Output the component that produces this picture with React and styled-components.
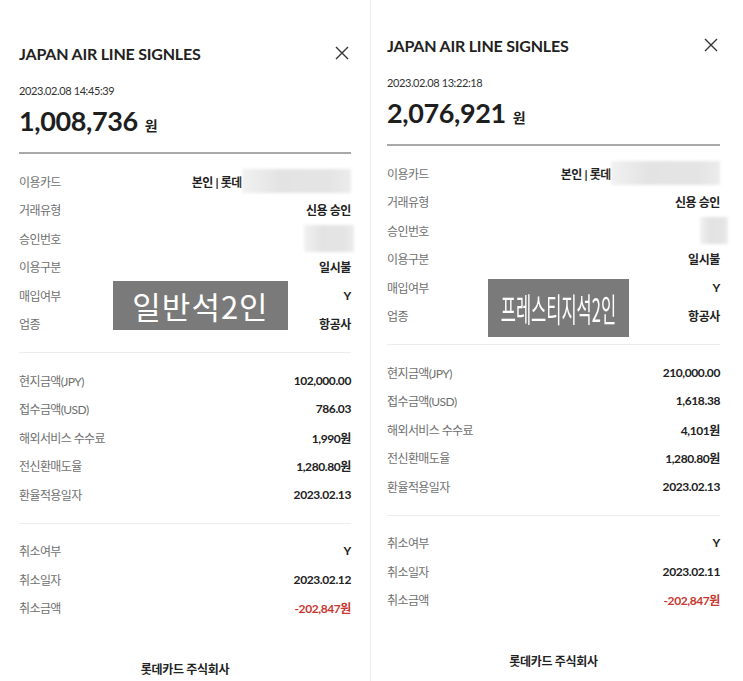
import React from "react";
import styled, { createGlobalStyle } from "styled-components";

const Global = createGlobalStyle`
  html, body {
    margin: 0;
    padding: 0;
    background: #fff;
    overflow: hidden;
  }
  body {
    font-family: "Lato", "Noto Sans CJK KR", sans-serif;
    color: #222;
  }
`;

const Page = styled.div`
  display: flex;
  width: 743px;
  height: 681px;
  background: #fff;
`;

const Panel = styled.div`
  box-sizing: border-box;
  width: ${(p) => p.$width}px;
  padding: ${(p) => p.$top}px ${(p) => p.$right}px 0 ${(p) => p.$left}px;
  border-right: ${(p) => (p.$border ? "1px solid #ececec" : "none")};
`;

const Head = styled.div`
  display: flex;
  align-items: center;
  justify-content: space-between;
  height: 20px;
`;

const Title = styled.h1`
  margin: 0;
  font-size: 16px;
  font-weight: 700;
  letter-spacing: -0.2px;
  color: #222;
`;

const Close = styled.button`
  display: flex;
  padding: 0;
  margin-right: 2px;
  border: 0;
  background: none;
`;

const DateText = styled.div`
  margin-top: 20px;
  line-height: 16px;
  font-size: 11px;
  letter-spacing: -0.4px;
  color: #333;
`;

const Amount = styled.div`
  display: flex;
  align-items: baseline;
  margin-top: 6px;
  height: 32px;
  line-height: 32px;
  font-size: 27px;
  font-weight: 700;
  letter-spacing: -0.4px;
  color: #1e1e1e;
`;

const Won = styled.span`
  margin-left: 7px;
  font-size: 14px;
  font-weight: 700;
`;

const Rule = styled.div`
  height: ${(p) => (p.$strong ? 2 : 1)}px;
  background: ${(p) => (p.$strong ? "#a9a9a9" : "#ededed")};
  margin-top: ${(p) => p.$mt || 0}px;
`;

const Section = styled.div`
  position: relative;
  padding: 13px 0 ${(p) => (p.$last ? 0 : 14)}px;
`;

const Row = styled.div`
  display: flex;
  align-items: center;
  justify-content: space-between;
  height: 28.5px;
`;

const Label = styled.span`
  font-size: 12px;
  color: #707070;
  letter-spacing: -0.6px;
`;

const Value = styled.span`
  display: flex;
  align-items: center;
  font-size: 12px;
  font-weight: 700;
  letter-spacing: -0.4px;
  color: ${(p) => (p.$red ? "#c8372f" : "#222")};
`;

const Blur = styled.span`
  display: inline-block;
  width: ${(p) => p.$w}px;
  height: ${(p) => p.$h}px;
  margin-right: ${(p) => p.$mr || 0}px;
  background: linear-gradient(90deg, #f1f1f1 0%, #e3e3e3 35%, #e4e4e4 80%, #ececec 100%);
  filter: blur(1.5px);
`;

const Stamp = styled.div`
  position: absolute;
  left: ${(p) => p.$x}px;
  top: ${(p) => p.$y}px;
  width: ${(p) => p.$w}px;
  height: ${(p) => p.$h}px;
  display: flex;
  align-items: center;
  justify-content: center;
  background: #7a7a7a;
  color: #fff;
  font-family: "Noto Sans CJK KR", sans-serif;
  font-weight: 400;
  overflow: hidden;
`;

const StampText = styled.span`
  display: inline-block;
  font-size: ${(p) => p.$size}px;
  letter-spacing: ${(p) => p.$ls || 0}px;
  transform: scaleX(${(p) => p.$sx || 1});
  white-space: nowrap;
`;

const Footer = styled.div`
  margin-top: 38px;
  line-height: 20px;
  text-align: center;
  font-size: 12px;
  font-weight: 700;
  letter-spacing: -0.3px;
  color: #222;
`;

function CloseIcon() {
  return (
    <svg width="14" height="14" viewBox="0 0 14 14">
      <path d="M1 1 L13 13 M13 1 L1 13" stroke="#333" strokeWidth="1.4" fill="none" />
    </svg>
  );
}

function Receipt({ data, layout }) {
  return (
    <Panel
      $width={layout.width}
      $top={layout.top}
      $left={layout.left}
      $right={layout.right}
      $border={layout.border}
    >
      <Head>
        <Title>JAPAN AIR LINE SIGNLES</Title>
        <Close>
          <CloseIcon />
        </Close>
      </Head>
      <DateText>{data.date}</DateText>
      <Amount>
        {data.amount}
        <Won>원</Won>
      </Amount>
      <Rule $strong $mt={15} />

      <Section>
        <Row>
          <Label>이용카드</Label>
          <Value>
            본인 | 롯데
            <Blur $w={109} $h={24} />
          </Value>
        </Row>
        <Row>
          <Label>거래유형</Label>
          <Value>신용 승인</Value>
        </Row>
        <Row>
          <Label>승인번호</Label>
          <Value>
            <Blur $w={layout.approvalW} $h={27} $mr={layout.approvalMr} />
          </Value>
        </Row>
        <Row>
          <Label>이용구분</Label>
          <Value>일시불</Value>
        </Row>
        <Row>
          <Label>매입여부</Label>
          <Value>Y</Value>
        </Row>
        <Row>
          <Label>업종</Label>
          <Value>항공사</Value>
        </Row>
        <Stamp $x={layout.stamp.x} $y={layout.stamp.y} $w={layout.stamp.w} $h={layout.stamp.h}>
          <StampText $size={layout.stamp.size} $sx={layout.stamp.sx} $ls={layout.stamp.ls}>
            {data.seat}
          </StampText>
        </Stamp>
      </Section>
      <Rule />

      <Section>
        <Row>
          <Label>현지금액(JPY)</Label>
          <Value>{data.jpy}</Value>
        </Row>
        <Row>
          <Label>접수금액(USD)</Label>
          <Value>{data.usd}</Value>
        </Row>
        <Row>
          <Label>해외서비스 수수료</Label>
          <Value>{data.fee}</Value>
        </Row>
        <Row>
          <Label>전신환매도율</Label>
          <Value>1,280.80원</Value>
        </Row>
        <Row>
          <Label>환율적용일자</Label>
          <Value>2023.02.13</Value>
        </Row>
      </Section>
      <Rule />

      <Section $last>
        <Row>
          <Label>취소여부</Label>
          <Value>Y</Value>
        </Row>
        <Row>
          <Label>취소일자</Label>
          <Value>{data.cancelDate}</Value>
        </Row>
        <Row>
          <Label>취소금액</Label>
          <Value $red>-202,847원</Value>
        </Row>
      </Section>

      <Footer>롯데카드 주식회사</Footer>
    </Panel>
  );
}

const economy = {
  date: "2023.02.08 14:45:39",
  amount: "1,008,736",
  seat: "일반석2인",
  jpy: "102,000.00",
  usd: "786.03",
  fee: "1,990원",
  cancelDate: "2023.02.12",
};

const prestige = {
  date: "2023.02.08 13:22:18",
  amount: "2,076,921",
  seat: "프레스티지석2인",
  jpy: "210,000.00",
  usd: "1,618.38",
  fee: "4,101원",
  cancelDate: "2023.02.11",
};

export default function App() {
  return (
    <>
      <Global />
      <Page>
        <Receipt
          data={economy}
          layout={{
            width: 371,
            top: 43,
            left: 19,
            right: 19,
            border: true,
            approvalW: 50,
            approvalMr: -3,
            stamp: { x: 94, y: 127, w: 175, h: 49, size: 31, sx: 1, ls: 1 },
          }}
        />
        <Receipt
          data={prestige}
          layout={{
            width: 372,
            top: 35,
            left: 16,
            right: 23,
            border: false,
            approvalW: 28,
            approvalMr: -8,
            stamp: { x: 101, y: 133, w: 141, h: 58, size: 33, sx: 0.5, ls: 0 },
          }}
        />
      </Page>
    </>
  );
}
